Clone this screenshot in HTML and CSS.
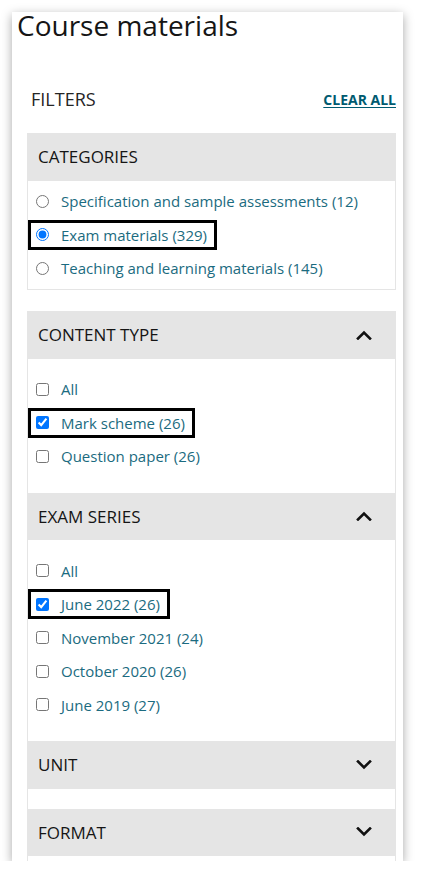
FILE: index.html
```html
<!DOCTYPE html>
<html lang="en">
<head>
<meta charset="utf-8">
<title>Course materials</title>
<link rel="stylesheet" href="styles.css">
</head>
<body>
<div class="card">
  <h1 class="title">Course materials</h1>
  <div class="filters">
    <div class="filters-head">
      <span class="filters-label">FILTERS</span>
      <a class="clear-all" href="#">CLEAR ALL</a>
    </div>

    <section class="group group-categories">
      <div class="group-head"><span>CATEGORIES</span></div>
      <div class="group-body cat-body">
        <div class="item"><label class="opt"><input type="radio" name="cat"><span>Specification and sample assessments (12)</span></label></div>
        <div class="item"><label class="opt hl"><input type="radio" name="cat" checked><span>Exam materials (329)</span></label></div>
        <div class="item"><label class="opt"><input type="radio" name="cat"><span>Teaching and learning materials (145)</span></label></div>
      </div>
    </section>

    <section class="group">
      <div class="group-head"><span>CONTENT TYPE</span>
        <svg class="chev" viewBox="0 0 16 10" width="16" height="10"><path d="M2 8.5 L8 2.5 L14 8.5" fill="none" stroke="#111" stroke-width="2.6" stroke-linecap="square"/></svg>
      </div>
      <div class="group-body">
        <div class="item"><label class="opt"><input type="checkbox"><span>All</span></label></div>
        <div class="item"><label class="opt hl"><input type="checkbox" checked><span>Mark scheme (26)</span></label></div>
        <div class="item"><label class="opt"><input type="checkbox"><span>Question paper (26)</span></label></div>
      </div>
    </section>

    <section class="group">
      <div class="group-head"><span>EXAM SERIES</span>
        <svg class="chev" viewBox="0 0 16 10" width="16" height="10"><path d="M2 8.5 L8 2.5 L14 8.5" fill="none" stroke="#111" stroke-width="2.6" stroke-linecap="square"/></svg>
      </div>
      <div class="group-body">
        <div class="item"><label class="opt"><input type="checkbox"><span>All</span></label></div>
        <div class="item"><label class="opt hl"><input type="checkbox" checked><span>June 2022 (26)</span></label></div>
        <div class="item"><label class="opt"><input type="checkbox"><span>November 2021 (24)</span></label></div>
        <div class="item"><label class="opt"><input type="checkbox"><span>October 2020 (26)</span></label></div>
        <div class="item"><label class="opt"><input type="checkbox"><span>June 2019 (27)</span></label></div>
      </div>
    </section>

    <section class="group">
      <div class="group-head"><span>UNIT</span>
        <svg class="chev" viewBox="0 0 16 10" width="16" height="10"><path d="M2 1.5 L8 7.5 L14 1.5" fill="none" stroke="#111" stroke-width="2.6" stroke-linecap="square"/></svg>
      </div>
      <div class="group-body collapsed"></div>
    </section>

    <section class="group">
      <div class="group-head"><span>FORMAT</span>
        <svg class="chev" viewBox="0 0 16 10" width="16" height="10"><path d="M2 1.5 L8 7.5 L14 1.5" fill="none" stroke="#111" stroke-width="2.6" stroke-linecap="square"/></svg>
      </div>
      <div class="group-body collapsed last"></div>
    </section>
  </div>
</div>
</body>
</html>
```

FILE: styles.css
```css
html, body {
  margin: 0;
  padding: 0;
  background: #ffffff;
}

body {
  font-family: "Open Sans", "Liberation Sans", sans-serif;
  color: #151515;
}

.card {
  margin: 12px 0 0 12px;
  width: 391px;
  height: 849px;
  background: #ffffff;
  box-shadow: 0 3px 10px rgba(0, 0, 0, 0.35);
}

.title {
  margin: 0;
  padding-left: 5px;
  font-size: 28px;
  line-height: 26px;
  font-weight: 400;
  color: #151515;
}

.filters {
  margin: 0 7px 0 15px;
}

.filters-head {
  display: flex;
  justify-content: space-between;
  align-items: center;
  height: 24px;
  margin-top: 49px;
  margin-bottom: 22px;
}

.filters-label {
  padding-left: 4px;
  font-size: 18px;
  color: #252525;
}

.clear-all {
  font-size: 14px;
  font-weight: 700;
  color: #005a70;
  text-decoration: underline;
  text-underline-offset: 2px;
}

.group-head {
  display: flex;
  align-items: center;
  justify-content: space-between;
  height: 47.5px;
  padding: 0 24px 0 11px;
  background: #e5e5e5;
  font-size: 17px;
  color: #151515;
}

.chev {
  display: block;
}

.group-body {
  border-left: 1px solid #e5e5e5;
  border-right: 1px solid #e5e5e5;
  padding: 14px 0 19.5px;
}

.cat-body {
  border-bottom: 1px solid #e5e5e5;
  padding: 4px 0 4px;
}

.group-categories {
  margin-bottom: 21px;
}

.collapsed {
  padding: 0;
  height: 20px;
}

.last {
  height: 5px;
}

.item {
  height: 33.5px;
  display: flex;
  align-items: center;
}

.opt {
  display: inline-flex;
  align-items: center;
  height: 24px;
  margin-left: 3px;
  padding: 0 7px 0 5px;
  font-size: 15px;
  color: #1b6b80;
  cursor: pointer;
}

.opt input {
  margin: 0 12px 0 0;
  width: 13px;
  height: 13px;
}

.hl {
  outline: 3px solid #000000;
}
```
